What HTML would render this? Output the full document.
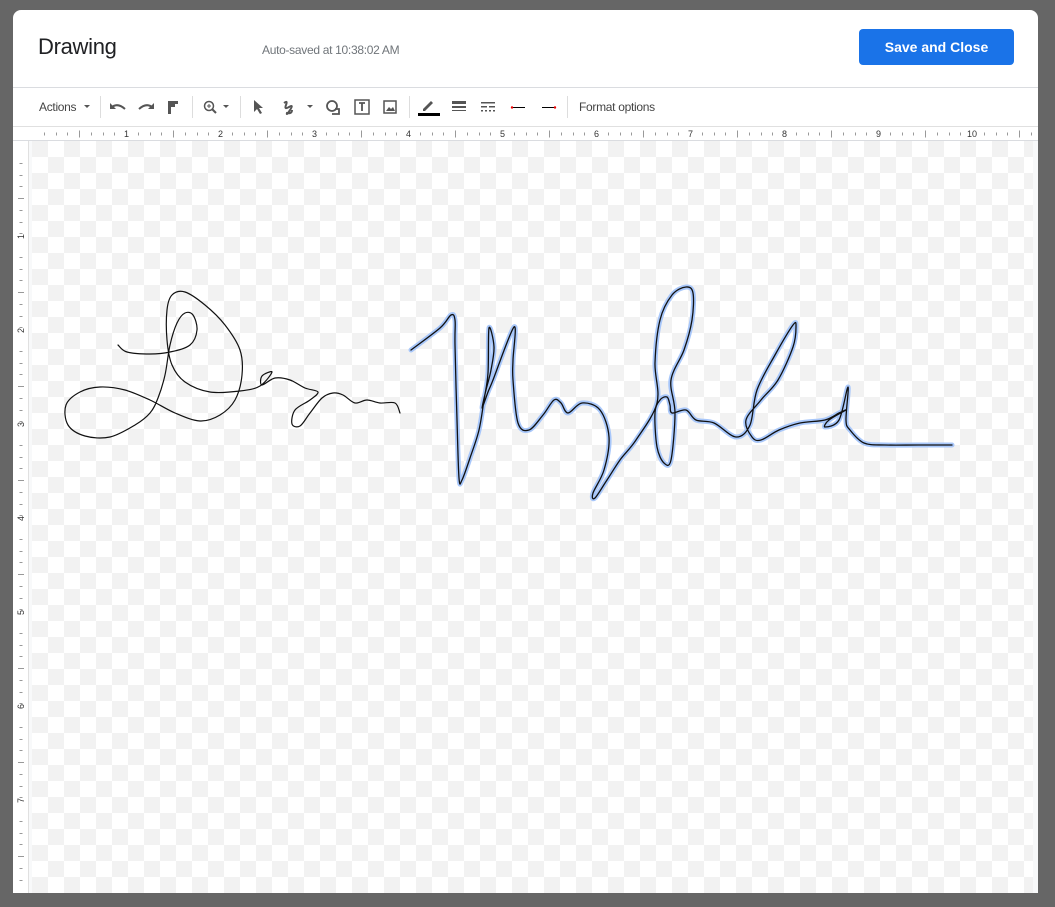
<!DOCTYPE html>
<html><head><meta charset="utf-8"><style>
*{margin:0;padding:0;box-sizing:border-box}
body{width:1055px;height:907px;overflow:hidden;background:#666;font-family:"Liberation Sans",Arial,sans-serif;position:relative}
#dlg{position:absolute;left:13px;top:10px;width:1025px;height:883px;background:#fff;border-radius:8px 8px 0 0;overflow:hidden}
.title{position:absolute;left:25px;top:24px;font-size:22px;color:#202124;letter-spacing:-0.3px}
.auto{position:absolute;left:249px;top:33px;font-size:12px;color:#70757a;letter-spacing:-0.3px}
.btn{position:absolute;left:846px;top:19px;width:155px;height:36px;background:#1a73e8;color:#fff;border-radius:4px;font-size:14px;font-weight:bold;text-align:center;line-height:36px}
.hr{position:absolute;left:0;top:77px;width:100%;height:1px;background:#dadce0}
.tb{position:absolute;left:0;top:78px;width:100%;height:38px}
.tb span{position:absolute;font-size:12px;color:#444;top:12px;letter-spacing:-0.3px}
.ruler{position:absolute;left:0;top:116px;width:100%;height:15px;background:#fff;border-top:1px solid #e0e0e0;border-bottom:1px solid #dadce0}
.vr{position:absolute;left:0;top:131px;width:16px;height:752px;background:#fff;border-right:1px solid #e0e0e0}
.canvas{position:absolute;left:16px;top:131px;width:1009px;height:752px;background:#f8f9fa}
.chk{position:absolute;left:3px;top:0;width:1001px;height:752px;background-color:#fff;
background-image:conic-gradient(#f2f2f2 25%,#fff 0 50%,#f2f2f2 0 75%,#fff 0);background-size:32px 32px;background-position:16px 0}
</style></head><body>
<div id="dlg">
<div class="title">Drawing</div>
<div class="auto">Auto-saved at 10:38:02 AM</div>
<div class="btn">Save and Close</div>
<div class="hr"></div>
<div class="tb">
<span style="left:26px">Actions</span>
<span style="left:566px">Format options</span>
<svg width="1025" height="38" style="position:absolute;left:0;top:0" fill="#555" stroke="#555">
<path d="M71 17l3 3 3-3z" stroke="none"/>
<g stroke="#ddd" stroke-width="1"><line x1="87.5" y1="8" x2="87.5" y2="30"/><line x1="179.5" y1="8" x2="179.5" y2="30"/><line x1="227.5" y1="8" x2="227.5" y2="30"/><line x1="396.5" y1="8" x2="396.5" y2="30"/><line x1="554.5" y1="8" x2="554.5" y2="30"/></g>
<path d="M98 20q6-6 14 1" fill="none" stroke-width="2"/><path d="M97 15v6h6z" stroke="none"/>
<path d="M140 20q-6-6-14 1" fill="none" stroke-width="2"/><path d="M141 15v6h-6z" stroke="none"/>
<path d="M155 13h10v3h-3v3h-4v7h-3z" stroke="none"/>
<circle cx="196" cy="18" r="4.5" fill="none" stroke-width="1.5"/><path d="M199 21l4 4" stroke-width="2"/><path d="M194 18h4M196 16v4" stroke-width="1"/>
<path d="M210 17l3 3 3-3z" stroke="none"/>
<path d="M241 12v12l3-3 3 5 2-1-3-5h4z" stroke="none"/>
<path d="M271 15q4-3 2 2t3 2 1 3-3 3q5 1 5-3" fill="none" stroke-width="2"/>
<path d="M294 17l3 3 3-3z" stroke="none"/>
<circle cx="319" cy="18" r="5" fill="none" stroke-width="1.8"/><path d="M322 21h4v5h-7" fill="none" stroke-width="1.8"/>
<rect x="342" y="12" width="14" height="14" fill="none" stroke-width="1.5"/><path d="M346 15h6M349 15v8" stroke-width="1.8"/>
<rect x="371" y="13" width="12" height="12" fill="none" stroke-width="1.5"/><path d="M373 23l3-4 2 2 2-2 2 4z" stroke="none"/>
<path d="M410 21l8-8 2 2-8 8h-2z" stroke="none"/><rect x="405" y="25" width="22" height="3" fill="#000" stroke="none"/>
<g stroke="none"><rect x="439" y="13" width="14" height="3"/><rect x="439" y="18" width="14" height="2"/><rect x="439" y="22" width="14" height="1"/>
<rect x="468" y="14" width="14" height="1.5"/><rect x="468" y="18" width="6" height="1.5"/><rect x="476" y="18" width="6" height="1.5"/><rect x="468" y="22" width="2" height="1.5"/><rect x="472" y="22" width="2" height="1.5"/><rect x="476" y="22" width="2" height="1.5"/><rect x="480" y="22" width="2" height="1.5"/></g>
<path d="M499 19.5h13M529 19.5h13" stroke="#000" stroke-width="1"/><circle cx="499" cy="19.5" r="1.2" fill="#e00" stroke="none"/><circle cx="542" cy="19.5" r="1.2" fill="#e00" stroke="none"/>
</svg>
</div>
<div class="ruler"><svg width="1025" height="14" style="position:absolute;left:0;top:0" font-size="9" fill="#333" font-family="Liberation Sans">
<g stroke="#999" stroke-width="1" id="ht"></g>
<text x="111" y="10">1</text><text x="205" y="10">2</text><text x="299" y="10">3</text><text x="393" y="10">4</text><text x="487" y="10">5</text><text x="581" y="10">6</text><text x="675" y="10">7</text><text x="769" y="10">8</text><text x="863" y="10">9</text><text x="954" y="10">10</text>
</svg></div>
<div class="vr"><svg width="16" height="752" style="position:absolute;left:0;top:0" font-size="9" fill="#333" font-family="Liberation Sans">
<g stroke="#999" stroke-width="1" id="vt"></g>
<text transform="translate(11,98) rotate(-90)">1</text><text transform="translate(11,192) rotate(-90)">2</text><text transform="translate(11,286) rotate(-90)">3</text><text transform="translate(11,380) rotate(-90)">4</text><text transform="translate(11,474) rotate(-90)">5</text><text transform="translate(11,568) rotate(-90)">6</text><text transform="translate(11,662) rotate(-90)">7</text>
</svg></div>
<div class="canvas"><div class="chk"></div></div>
</div>
<svg width="1055" height="907" style="position:absolute;left:0;top:0" fill="none" stroke-linejoin="round" stroke-linecap="round">
<path id="s1" stroke="#111" stroke-width="1.2" data-p="118,345 127,352 150,354 170,352 190,345 197,330 193,315 185,313 177,323 170,345 165,375 158,398 150,413 135,425 110,437 85,436 68,425 66,405 80,392 100,387 125,390 150,400 175,413 200,421 220,415 235,400 242,375 240,350 225,325 205,305 185,292 172,295 167,310 167,340 172,365 185,382 210,392 240,391 260,386 272,372 262,376 262,385 275,378 290,380 305,388 318,392 310,400 295,410 292,424 300,426 310,413 322,398 333,393 343,395 355,403 367,400 380,403 395,403 400,413"/>
<path id="s2a" stroke="#a8c7fa" stroke-width="5"/>
<path id="s2" stroke="#111" stroke-width="1.3" data-p="411,350 440,328 451,315 455,320 455,345 457,420 459,478 462,480 470,458 479,430 484,400 488,373 489,328 494,347 491,370 486,390 482,408 488,392 493,380 514,327 513,360 513,380 518,423 529,430 543,415 554,400 561,403 568,413 582,403 600,410 609,437 604,470 593,493 595,498 607,480 620,460 636,440 657,403 655,363 660,320 672,295 686,287 693,293 692,320 684,350 671,380 675,413 671,460 664,463 657,447 655,413 660,400 667,397 670,405 672,413 686,410 696,420 714,423 736,437 750,425 757,390 775,355 793,325 796,327 793,347 778,380 761,400 746,420 752,437 761,440 779,430 800,423 825,420 839,413 846,410 829,420 825,427 839,420 848,387 846,420 850,430 864,443 885,445 918,445 952,445"/>
</svg>
<script>
function cr(str){var a=str.trim().split(/\s+/).map(function(s){return s.split(',').map(Number)});
var d='M'+a[0][0]+' '+a[0][1];
for(var i=0;i<a.length-1;i++){var p0=a[i-1]||a[i],p1=a[i],p2=a[i+1],p3=a[i+2]||p2;
d+=' C'+(p1[0]+(p2[0]-p0[0])/6).toFixed(1)+' '+(p1[1]+(p2[1]-p0[1])/6).toFixed(1)+' '+(p2[0]-(p3[0]-p1[0])/6).toFixed(1)+' '+(p2[1]-(p3[1]-p1[1])/6).toFixed(1)+' '+p2[0]+' '+p2[1];}
return d;}
var e1=document.getElementById('s1');e1.setAttribute('d',cr(e1.getAttribute('data-p')));
var e2=document.getElementById('s2'),d2=cr(e2.getAttribute('data-p'));e2.setAttribute('d',d2);document.getElementById('s2a').setAttribute('d',d2);
var h=document.getElementById('ht'),s='';
for(var i=0;i<88;i++){var x=32-13+i*94/8;if(x>1020)break;var m=i%8;if(m==0)continue;var l=(m==4)?7:3;s+='<line x1="'+(Math.round(x)+.5)+'" y1="'+(7-l/2)+'" x2="'+(Math.round(x)+.5)+'" y2="'+(7+l/2)+'"/>';}
h.innerHTML=s;
var v=document.getElementById('vt');s='';
for(var i=0;i<70;i++){var y=10+i*94/8;if(y>750)break;var m=i%8;if(m==0)continue;var l=(m==4)?6:3;s+='<line y1="'+(Math.round(y)+.5)+'" x1="'+(8-l/2)+'" y2="'+(Math.round(y)+.5)+'" x2="'+(8+l/2)+'"/>';}
v.innerHTML=s;
</script>
</body></html>
